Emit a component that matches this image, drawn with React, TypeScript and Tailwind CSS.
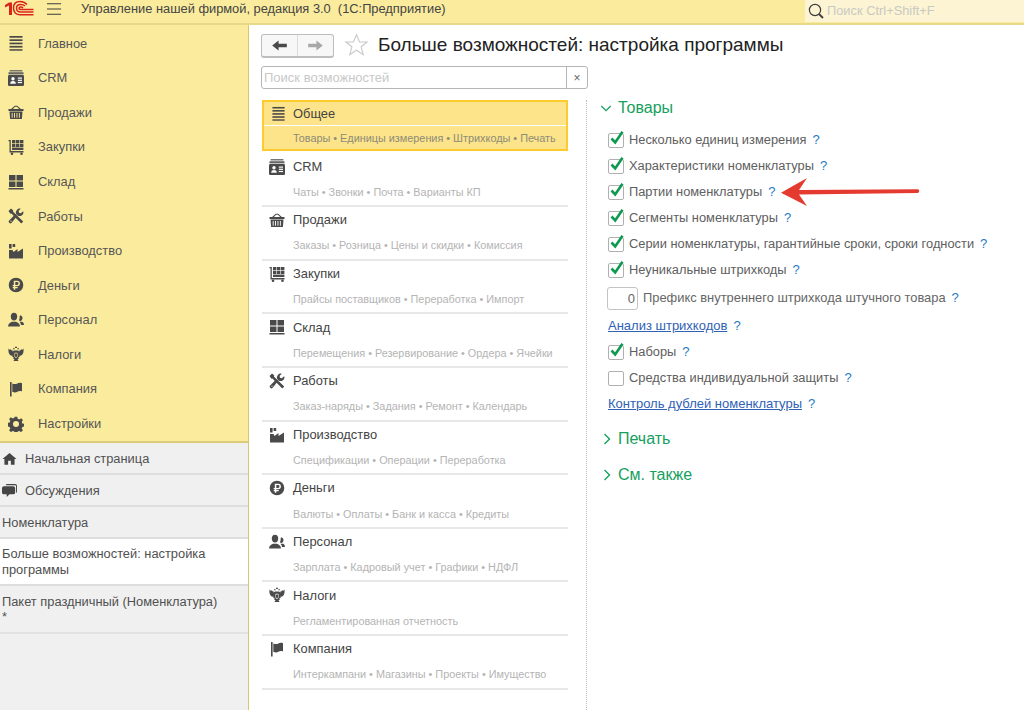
import React from "react";

type IconName = "main" | "crm" | "sales" | "buy" | "stock" | "work" | "prod" | "money" | "staff" | "tax" | "company" | "settings";

function Icon({ name, className = "" }: { name: IconName; className?: string }) {
  const c = "#4a4a4a";
  return (
    <svg viewBox="0 0 16 16" className={className} fill={c}>
      {name === "main" && (
        <g>
          <rect x="1.500" y="1" width="13" height="1.700" />
          <rect x="1.500" y="4.300" width="13" height="1.700" />
          <rect x="1.500" y="7.600" width="13" height="1.700" />
          <rect x="1.500" y="10.900" width="13" height="1.700" />
          <rect x="1.500" y="14.200" width="13" height="1.500" />
        </g>
      )}
      {name === "crm" && (
        <g>
          <rect x="1.500" y="0" width="13" height="1.600" rx="0.500" fill="#777" />
          <rect x="0.500" y="2.200" width="15" height="2.200" fill="#666" />
          <rect x="0" y="5" width="16" height="11" rx="1.200" />
          <circle cx="5" cy="8.800" r="1.700" fill="#fff" />
          <path d="M2.200 13.800c0-2.200 1.300-2.900 2.800-2.900s2.800.7 2.800 2.900z" fill="#fff" />
          <rect x="9.800" y="7.500" width="4.200" height="1.200" fill="#fff" />
          <rect x="9.800" y="9.700" width="4.200" height="1.200" fill="#fff" />
          <rect x="9.800" y="11.900" width="4.200" height="1.200" fill="#fff" />
        </g>
      )}
      {name === "sales" && (
        <g>
          <path d="M3.500 5.500 7 2.200h2l3.500 3.300" fill="none" stroke={c} strokeWidth="1.100" />
          <rect x="0.500" y="5" width="15" height="2" />
          <path
            d="M1.500 7.500h13l-.6 7.500H2.100zM3.700 9v4.700h.9V9zm2.400 0v4.700h.9V9zm2.400 0v4.700h.9V9zm2.400 0v4.700h.9V9z"
            fillRule="evenodd"
          />
        </g>
      )}
      {name === "buy" && (
        <g>
          <path d="M0.500 1h2.300v11h12.700v1.400H1.500V2.300H0.500z" />
          <rect x="4" y="1" width="3.400" height="3.200" />
          <rect x="8" y="1" width="3.400" height="3.200" />
          <rect x="12" y="1" width="3.400" height="3.200" />
          <rect x="4" y="4.800" width="3.400" height="3.200" />
          <rect x="8" y="4.800" width="3.400" height="3.200" />
          <rect x="12" y="4.800" width="3.400" height="3.200" />
          <rect x="4" y="8.600" width="11.400" height="2.400" />
          <circle cx="4" cy="14.700" r="1.300" />
          <circle cx="13.500" cy="14.700" r="1.300" />
        </g>
      )}
      {name === "stock" && (
        <g>
          <rect x="1" y="1" width="6.500" height="5.500" />
          <rect x="8.500" y="1" width="6.500" height="5.500" />
          <rect x="1" y="7.500" width="6.500" height="5.500" />
          <rect x="8.500" y="7.500" width="6.500" height="5.500" />
          <rect x="0.500" y="14" width="15" height="1.500" />
        </g>
      )}
      {name === "work" && (
        <g>
          <path d="M.500 3 3 .5l2.300 2-.4 1.100 10.300 9.900-1.900 2L3.400 5.400l-1 .3z" />
          <path d="M7.300 6.300 9 8l-5.300 6.800a1.700 1.700 0 0 1-2.500-2.400z" />
          <path
            fillRule="evenodd"
            d="M15.500 4.200a3.900 3.900 0 0 1-5.600 3.500L8.100 6A3.900 3.900 0 0 1 12.800.8l-2.100 2 .2 2 2 .4 2.200-2z"
          />
          <circle cx="3" cy="13.200" r=".6" fill="#fbec9d" />
        </g>
      )}
      {name === "prod" && (
        <g>
          <rect x="1" y="1" width="2.600" height="4.500" />
          <rect x="4.600" y="1" width="2.600" height="3" />
          <path d="M1 15.500V7h3.500l1 2 4-3v3l5.500-3.500v10z" />
        </g>
      )}
      {name === "money" && (
        <path
          fillRule="evenodd"
          d="M8 .7a7.300 7.300 0 1 0 0 14.600A7.300 7.300 0 0 0 8 .7zM5.800 3.800h3.400a2.700 2.700 0 0 1 0 5.400H7.300v.9h2.400v1.200H7.300v1.500H5.800v-1.500H4.700v-1.200h1.100v-.9H4.700V7.900h1.100zm1.500 1.300v2.800h1.800a1.400 1.400 0 0 0 0-2.800z"
        />
      )}
      {name === "staff" && (
        <g>
          <path d="M6 .8c2 0 3.200 1.500 3.200 3.600C9.200 6.600 8 8.500 6 8.500S2.800 6.600 2.800 4.400C2.800 2.300 4 .8 6 .8z" />
          <path d="M0 14.500c0-2.800 2-3.800 4-4.800h4c2 1 4 2 4 4.800z" />
          <path d="M12.300 3.500c1.300 0 2.200 1 2.200 2.500s-.9 3-2.200 3c-.5 0-1-.3-1.400-.7.6-1 .9-2.200.7-3.500.1-.9.300-1.500.7-1.800z" />
          <path d="M11.500 9.800h2.700c1 .5 1.800 1.500 1.800 3.200h-3c-.1-1.300-.6-2.300-1.500-3.200z" />
        </g>
      )}
      {name === "tax" && (
        <g>
          <path d="M6.800.7h2.400l-.4 1.300h-1.600z" />
          <path d="M4.700 3.300 5.900 1.800 7 3.300zM11.300 3.300 10.100 1.800 9 3.300z" />
          <path
            fillRule="evenodd"
            d="M.5 2.500 2 4l.4-1 1.100 1.500.5-.9.700 2 1.300-1.200h4l1.300 1.200.7-2 .5.900L13.600 3l.4 1 1.500-1.500c.4 3.500-.3 6-2.500 7.300l-1.500-.3.200 1.500-1.400.3.600 1.500-1.400.2 1 2H5.500l1-2-1.400-.2.600-1.500-1.400-.3.200-1.500-1.500.3C.8 8.500.1 6 .5 2.500zM6.500 6.800v3.200c0 1 .7 1.800 1.500 2 .8-.2 1.500-1 1.500-2V6.800z"
          />
          <path d="M7 7.400h2V10c0 .6-.4 1.200-1 1.400-.6-.2-1-.8-1-1.400z" />
        </g>
      )}
      {name === "company" && (
        <g>
          <rect x="2" y="1" width="1.600" height="14.500" />
          <path d="M4.300 2.500c2 .8 3.500.8 5 0 1.300-.7 3-1 4.700-.3v8.300c-1.700-.7-3.400-.4-4.700.3-1.500.8-3 .8-5 0z" />
        </g>
      )}
      {name === "settings" && (
        <path
          fillRule="evenodd"
          d="M6.700.8h2.600l.4 2 1.600.7 1.800-1.200 1.800 1.800-1.200 1.800.7 1.600 2 .4v2.600l-2 .4-.7 1.600 1.200 1.800-1.800 1.800-1.800-1.200-1.600.7-.4 2H6.700l-.4-2-1.600-.7-1.800 1.200-1.800-1.800 1.200-1.800-.7-1.600-2-.4V6.900l2-.4.7-1.600-1.200-1.800 1.800-1.800 1.800 1.200 1.600-.7zM8 5a3 3 0 1 0 0 6 3 3 0 0 0 0-6z"
        />
      )}
    </svg>
  );
}

const nav: { icon: IconName; label: string }[] = [
  { icon: "main", label: "Главное" },
  { icon: "crm", label: "CRM" },
  { icon: "sales", label: "Продажи" },
  { icon: "buy", label: "Закупки" },
  { icon: "stock", label: "Склад" },
  { icon: "work", label: "Работы" },
  { icon: "prod", label: "Производство" },
  { icon: "money", label: "Деньги" },
  { icon: "staff", label: "Персонал" },
  { icon: "tax", label: "Налоги" },
  { icon: "company", label: "Компания" },
  { icon: "settings", label: "Настройки" },
];

const sections: { icon: IconName; label: string; sub: string }[] = [
  { icon: "main", label: "Общее", sub: "Товары • Единицы измерения • Штрихкоды • Печать" },
  { icon: "crm", label: "CRM", sub: "Чаты • Звонки • Почта • Варианты КП" },
  { icon: "sales", label: "Продажи", sub: "Заказы • Розница • Цены и скидки • Комиссия" },
  { icon: "buy", label: "Закупки", sub: "Прайсы поставщиков • Переработка • Импорт" },
  { icon: "stock", label: "Склад", sub: "Перемещения • Резервирование • Ордера • Ячейки" },
  { icon: "work", label: "Работы", sub: "Заказ-наряды • Задания • Ремонт • Календарь" },
  { icon: "prod", label: "Производство", sub: "Спецификации • Операции • Переработка" },
  { icon: "money", label: "Деньги", sub: "Валюты • Оплаты • Банк и касса • Кредиты" },
  { icon: "staff", label: "Персонал", sub: "Зарплата • Кадровый учет • Графики • НДФЛ" },
  { icon: "tax", label: "Налоги", sub: "Регламентированная отчетность" },
  { icon: "company", label: "Компания", sub: "Интеркампани • Магазины • Проекты • Имущество" },
];

function Help() {
  return <span className="ml-[6px] text-[13px] text-[#1f7ac4]">?</span>;
}

function Check({ checked = true, label, className = "" }: { checked?: boolean; label: string; className?: string }) {
  return (
    <div className={`flex items-center h-[26px] pl-[8px] ${className}`}>
      <span className="relative w-[16px] h-[15px] mt-[1px] shrink-0 rounded-[2px] border border-[#b0b0b0] bg-white">
        {checked && (
          <svg viewBox="0 0 16 16" className="absolute left-[0px] top-[-4px] w-[16px] h-[16px]">
            <path d="M2.500 8.500 6.200 12.500 13.500 1.800" fill="none" stroke="#0d9a50" strokeWidth="2.600" />
          </svg>
        )}
      </span>
      <span className="ml-[5px] text-[12.85px] text-[#606060]">{label}</span>
      <Help />
    </div>
  );
}

function Group({ label }: { label: string }) {
  return (
    <div className="flex items-center h-[36px] pl-[2px]">
      <svg viewBox="0 0 10 14" className="w-[10px] h-[14px]">
        <path d="M2.500 2 7.500 7 2.500 12" fill="none" stroke="#18a060" strokeWidth="1.400" />
      </svg>
      <span className="ml-[6px] text-[16px] text-[#16a05d]">{label}</span>
    </div>
  );
}

export default function App() {
  return (
    <div className="w-[1024px] h-[710px] overflow-hidden flex flex-col bg-white font-['Liberation_Sans',Arial,sans-serif]">
      <header className="h-[25px] shrink-0 flex bg-[#fbec9d] border-b-2 border-[#e8d987]">
        <svg viewBox="0 0 34 16" className="w-[34px] h-[16px]">
          <path d="M5 5 9 2.500h3V15H9V5.500L5 7.500z" fill="#d9251c" />
          <path
            d="M27 4.500C25 2.500 22.500 1.500 20 1.500 15.500 1.500 13.500 4.500 13.500 8c0 4 2.500 6.800 6.500 6.800h13.500M25 6c-1-1-3-1.500-4.500-1.500-2.500 0-4 1.500-4 3.500 0 2.500 1.500 4 4 4h13M23 8c-.5-.8-1.500-1-2.500-1s-1.500.5-1.500 1.300c0 .7.5 1.200 1.500 1.200h13"
            fill="none"
            stroke="#d9251c"
            strokeWidth="1.500"
          />
        </svg>
        <svg viewBox="0 0 16 14" className="ml-[13px] mt-[2px] w-[15px] h-[14px]">
          <path d="M0 1.500h15M0 7h15M0 12.500h15" stroke="#3d3d3d" strokeWidth="1.100" />
        </svg>
        <div className="ml-[19px] text-[12.85px] leading-[17px] text-[#444]">
          Управление нашей фирмой, редакция 3.0&nbsp; (1С:Предприятие)
        </div>
        <div className="ml-auto w-[219px] h-[22px] flex items-center bg-[#fcf4d2] pl-[3px]">
          <svg viewBox="0 0 16 16" className="w-[16px] h-[16px]">
            <circle cx="7" cy="7" r="5.600" fill="none" stroke="#3e3e3e" strokeWidth="1.200" />
            <path d="M11 11 15 15" stroke="#3e3e3e" strokeWidth="1.800" />
          </svg>
          <span className="ml-[3px] text-[12.85px] text-[#c9c9c4]">Поиск Ctrl+Shift+F</span>
        </div>
      </header>

      <div className="flex flex-1 min-h-0">
        <aside className="w-[249px] shrink-0 flex flex-col bg-[#f0f0f0] border-r border-[#d9c871]">
          <nav className="h-[418px] shrink-0 pt-[1px] bg-[#fbec9d] border-b-2 border-[#dccb78]">
            {nav.map((n) => (
              <div key={n.label} className="h-[34.58px] flex items-center pl-[8px]">
                <Icon name={n.icon} className="w-[16px] h-[16px]" />
                <span className="ml-[14px] text-[12.9px] text-[#565656]">{n.label}</span>
              </div>
            ))}
          </nav>
          <div className="h-[32px] flex items-center pl-[2px] pt-[1px] border-b-2 border-[#dedede]">
            <svg viewBox="0 0 16 16" className="w-[15px] h-[14px]">
              <path d="M8 1 16 8h-2.200v6.500H9.600V10H6.400v4.500H2.200V8H0z" fill="#454545" />
            </svg>
            <span className="ml-[8px] text-[12.85px] text-[#505050]">Начальная страница</span>
          </div>
          <div className="h-[32px] flex items-center pl-[2px] pt-[1px] border-b-2 border-[#dedede]">
            <svg viewBox="0 0 16 16" className="w-[15px] h-[15px]">
              <path d="M5 1h9a2 2 0 0 1 2 2v6a2 2 0 0 1-1 1.700V3.500a1 1 0 0 0-1-1H4A2 2 0 0 1 5 1z" fill="#454545" />
              <path d="M2 3.500h10a2 2 0 0 1 2 2V10a2 2 0 0 1-2 2H8l-3 3v-3H2a2 2 0 0 1-2-2V5.500a2 2 0 0 1 2-2z" fill="#454545" />
            </svg>
            <span className="ml-[8px] text-[12.85px] text-[#505050]">Обсуждения</span>
          </div>
          <div className="h-[32px] flex items-center pl-[2px] pt-[1px] border-b-2 border-[#dedede] text-[12.85px] text-[#505050]">
            Номенклатура
          </div>
          <div className="h-[47px] pl-[2px] pt-[7px] bg-white border-b-2 border-[#dedede] text-[12.85px] leading-[16px] text-[#505050]">
            Больше возможностей: настройка
            <br />
            программы
          </div>
          <div className="h-[48px] pl-[2px] pt-[8px] border-b-2 border-[#e2e2e2] text-[12.85px] leading-[15px] text-[#505050]">
            Пакет праздничный (Номенклатура)
            <br />*
          </div>
        </aside>

        <main className="relative flex-1 min-w-0 pl-[12px]">
          <div className="flex items-center h-[25px] mt-[8px]">
            <div className="flex w-[73px] h-[24px] rounded-[3px] border border-[#bdbdbd] border-b-2 bg-[#f7f7f7]">
              <div className="w-[36px] flex items-center justify-center border-r border-[#dcdcdc]">
                <svg viewBox="0 0 16 12" className="w-[15px] h-[11px]">
                  <path d="M0 6 7 .5v3.700h9v3.600H7v3.700z" fill="#4a4a4a" />
                </svg>
              </div>
              <div className="flex-1 flex items-center justify-center">
                <svg viewBox="0 0 16 12" className="w-[15px] h-[11px]">
                  <path d="M16 6 9 .5v3.700H0v3.600h9v3.700z" fill="#a8a8a8" />
                </svg>
              </div>
            </div>
            <svg viewBox="0 0 24 24" className="ml-[10px] -mt-[2px] w-[25px] h-[24px]">
              <path
                d="M12 1.800 15 9h7.600l-6 4.800 2.200 8L12 17.200l-6.800 4.600 2.200-8-6-4.800H9z"
                fill="none"
                stroke="#c9c9c9"
                strokeWidth="1.100"
              />
            </svg>
            <h1 className="ml-[9px] -mt-[2px] text-[19px] leading-[24px] text-[#222]">
              Больше возможностей: настройка программы
            </h1>
          </div>

          <div className="flex w-[327px] h-[23px] mt-[8px] rounded-[3px] border border-[#b5b5b5] bg-white">
            <div className="flex-1 pl-[2px] text-[13px] leading-[21px] text-[#c8c8c8]">Поиск возможностей</div>
            <div className="w-[21px] flex items-center justify-center border-l border-[#b5b5b5] text-[12px] text-[#666]">×</div>
          </div>

          <div className="flex mt-[11px]">
            <div className="w-[306px] ml-[1px] shrink-0">
              {sections.map((s, i) =>
                i === 0 ? (
                  <div key={s.label} className="h-[51px] mb-[2.500px] border-2 border-[#fdcb2d] bg-[#fde38a]">
                    <div className="h-[24px] flex items-center pl-[7px] border-b border-white">
                      <Icon name={s.icon} className="w-[15px] h-[15px]" />
                      <span className="ml-[7px] text-[12.9px] text-[#444]">{s.label}</span>
                    </div>
                    <div className="h-[23px] flex items-center pt-[2px] pl-[29px] text-[10.85px] text-[#8c8c78]">{s.sub}</div>
                  </div>
                ) : (
                  <div key={s.label} className="h-[53.62px] border-b-2 border-[#e8e8e8]">
                    <div className="h-[26px] flex items-center pl-[7px]">
                      <Icon name={s.icon} className="w-[16px] h-[16px]" />
                      <span className="ml-[8px] text-[12.9px] text-[#444]">{s.label}</span>
                    </div>
                    <div className="h-[25px] flex items-center pl-[31px] text-[10.85px] text-[#b4b4b4]">{s.sub}</div>
                  </div>
                )
              )}
            </div>

            <div className="ml-[18px] h-[620px] border-l border-dotted border-[#bdbdbd]" />

            <div className="ml-[13px] flex-1">
              <div className="flex items-center h-[18px] -mt-[1px]">
                <svg viewBox="0 0 14 10" className="w-[12px] h-[9px]">
                  <path d="M1.500 2 7 7.500 12.500 2" fill="none" stroke="#18a060" strokeWidth="1.500" />
                </svg>
                <span className="ml-[6px] text-[16px] text-[#16a05d]">Товары</span>
              </div>
              <div className="mt-[10px]">
                <Check label="Несколько единиц измерения" />
                <Check label="Характеристики номенклатуры" />
                <Check label="Партии номенклатуры" />
                <Check label="Сегменты номенклатуры" />
                <Check label="Серии номенклатуры, гарантийные сроки, сроки годности" />
                <Check label="Неуникальные штрихкоды" />
                <div className="flex items-center h-[30px] pl-[7px]">
                  <div className="w-[31px] h-[23px] rounded-[3px] border border-[#c4c4c4] text-right pr-[2px] text-[13px] leading-[21px] text-[#666]">0</div>
                  <span className="ml-[5px] text-[12.9px] text-[#666]">Префикс внутреннего штрихкода штучного товара</span>
                  <Help />
                </div>
                <div className="flex items-center h-[25px] pl-[8px]">
                  <span className="text-[13px] text-[#2f62b5] underline">Анализ штрихкодов</span>
                  <Help />
                </div>
                <Check label="Наборы" className="mt-[1px]" />
                <Check checked={false} label="Средства индивидуальной защиты" />
                <div className="flex items-center h-[25px] pl-[8px]">
                  <span className="text-[13px] text-[#2f62b5] underline">Контроль дублей номенклатуры</span>
                  <Help />
                </div>
              </div>
              <div className="mt-[5px]">
                <Group label="Печать" />
                <Group label="См. также" />
              </div>
            </div>
          </div>

          <svg viewBox="0 0 140 28" className="absolute left-[532px] top-[153px] w-[140px] h-[28px]">
            <path d="M0 14.700 26 0 18 12 137 11.300Q139.500 13 137 15L18 16.500 26 28z" fill="#e53a30" />
          </svg>
        </main>
      </div>
    </div>
  );
}
